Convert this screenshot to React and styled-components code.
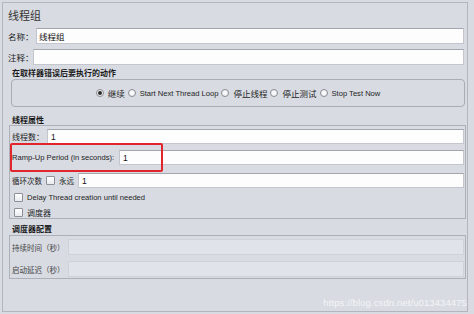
import React from "react";
import styled, { createGlobalStyle } from "styled-components";

const GlobalStyle = createGlobalStyle`
  body {
    margin: 0;
    background: #d8dbe2;
    font-family: "Liberation Sans", "Noto Sans CJK SC", sans-serif;
    color: #1e1e1e;
  }
`;

const Page = styled.div`
  width: 474px;
  height: 314px;
  padding: 2px 6px 0 2px;
  box-sizing: border-box;
  overflow: hidden;
`;

const Frame = styled.div`
  height: 310px;
  box-sizing: border-box;
  border: 1px solid #b3b6bd;
  display: flex;
  flex-direction: column;
`;

const Title = styled.div`
  margin: 5px 0 0 5px;
  height: 14px;
  line-height: 14px;
  font-size: 11px;
  font-family: "Noto Sans CJK SC", sans-serif;
  color: #333;
`;

const FieldRow = styled.div`
  display: flex;
  align-items: center;
  height: ${p => p.h || 16}px;
  margin-top: ${p => p.mt || 0}px;
  padding: ${p => p.pad || '0 3px 0 5px'};
`;

const Label = styled.span`
  font-size: ${p => p.size || (p.latin ? 7.6 : 8)}px;
  font-family: ${p => p.latin ? '"Liberation Sans"' : '"Noto Sans CJK SC"'}, sans-serif;
  width: ${p => p.w ? `${p.w}px` : 'auto'};
  flex-shrink: 0;
  white-space: nowrap;
  color: ${p => p.dim ? '#454545' : '#1e1e1e'};
`;

const TextInput = styled.input`
  flex: 1;
  min-width: 0;
  height: 100%;
  box-sizing: border-box;
  border: 1px solid #c3c6cc;
  border-top-color: #a3a6ac;
  background: ${p => p.disabled ? '#e0e3ea' : '#fdfdfd'};
  padding: 0 0 0 ${p => p.pl || 3}px;
  font-size: 8.5px;
  font-family: "Liberation Sans", "Noto Sans CJK SC", sans-serif;
  color: #111;
  outline: none;
  ${p => p.disabled && 'border-color: #cfd2d8;'}
`;

const Heading = styled.div`
  margin: ${p => p.mt}px 0 0 9px;
  height: 10px;
  line-height: 10px;
  font-size: 8px;
  font-weight: bold;
  font-family: "Noto Sans CJK SC", sans-serif;
  color: #1a1a1a;
`;

const ActionBox = styled.div`
  margin: 1px 2px 0 8px;
  height: 28px;
  box-sizing: border-box;
  border: 1px solid #a9acb3;
  border-radius: 4px;
  display: flex;
  align-items: center;
  justify-content: center;
  gap: 3px;
`;

const RadioItem = styled.label`
  display: flex;
  align-items: center;
  gap: 4px;
`;

const Radio = styled.span`
  width: 8px;
  height: 8px;
  box-sizing: border-box;
  border-radius: 50%;
  border: 1px solid #8b8e94;
  background: radial-gradient(circle, #ffffff 0%, #e6e8ec 100%);
  display: flex;
  align-items: center;
  justify-content: center;
  &::after {
    content: "";
    display: ${p => p.checked ? 'block' : 'none'};
    width: 4px;
    height: 4px;
    border-radius: 50%;
    background: #2a2a2a;
  }
`;

const Box = styled.div`
  position: relative;
  margin: ${p => p.mt || 0}px 1px 0 6px;
  height: ${p => p.h}px;
  box-sizing: border-box;
  border: 1px solid #adb0b7;
  display: flex;
  flex-direction: column;
`;

const CheckRow = styled.div`
  display: flex;
  align-items: center;
  gap: 4px;
  height: 12px;
  margin-top: 3px;
  padding-left: 4px;
`;

const Check = styled.span`
  width: 9px;
  height: 9px;
  box-sizing: border-box;
  border: 1px solid #8d9096;
  border-radius: 1px;
  background: linear-gradient(#ffffff, #e9ebef);
  flex-shrink: 0;
  margin: ${p => p.m || 0};
`;

const Highlight = styled.div`
  position: absolute;
  left: 0;
  top: 17px;
  width: 153px;
  height: 29px;
  box-sizing: border-box;
  border: 2px solid #e0252c;
  border-radius: 2px;
  pointer-events: none;
`;

const Watermark = styled.div`
  margin-top: auto;
  margin-bottom: 3px;
  align-self: flex-end;
  font-size: 9.5px;
  font-family: "Liberation Sans", sans-serif;
  color: rgba(255, 255, 255, 0.75);
  letter-spacing: 0.1px;
`;

const actions = [
  { label: '继续', checked: true },
  { label: 'Start Next Thread Loop', latin: true },
  { label: '停止线程' },
  { label: '停止测试' },
  { label: 'Stop Test Now', latin: true },
];

export default function App() {
  return (
    <Page>
      <GlobalStyle />
      <Frame>
        <Title>线程组</Title>
        <FieldRow mt={6}>
          <Label w={28} size={8.5}>名称：</Label>
          <TextInput readOnly defaultValue="线程组" pl={2} />
        </FieldRow>
        <FieldRow mt={5}>
          <Label w={25} size={8.5}>注释：</Label>
          <TextInput readOnly defaultValue="" />
        </FieldRow>

        <Heading mt={3}>在取样器错误后要执行的动作</Heading>
        <ActionBox>
          {actions.map(a => (
            <RadioItem key={a.label}>
              <Radio checked={a.checked} />
              <Label latin={a.latin} size={a.latin ? 7.6 : 8.5}>{a.label}</Label>
            </RadioItem>
          ))}
        </ActionBox>

        <Heading mt={8}>线程属性</Heading>
        <Box h={94}>
          <FieldRow mt={3} h={15} pad="0 1px 0 2px">
            <Label w={35}>线程数：</Label>
            <TextInput readOnly defaultValue="1" />
          </FieldRow>
          <FieldRow mt={6} h={15} pad="0 1px 0 2px">
            <Label latin w={107}>Ramp-Up Period (in seconds):</Label>
            <TextInput readOnly defaultValue="1" />
          </FieldRow>
          <FieldRow mt={8} h={15} pad="0 1px 0 2px">
            <Label w={34} size={7.5}>循环次数</Label>
            <Check m="0 4px 0 0" />
            <Label w={19} size={7.5}>永远</Label>
            <TextInput readOnly defaultValue="1" />
          </FieldRow>
          <CheckRow>
            <Check />
            <Label latin>Delay Thread creation until needed</Label>
          </CheckRow>
          <CheckRow>
            <Check />
            <Label>调度器</Label>
          </CheckRow>
          <Highlight />
        </Box>

        <Heading mt={5}>调度器配置</Heading>
        <Box h={44} mt={1}>
          <FieldRow mt={3} pad="0 1px 0 2px">
            <Label w={56} size={7.5} dim>持续时间（秒）</Label>
            <TextInput disabled readOnly defaultValue="" />
          </FieldRow>
          <FieldRow mt={6} pad="0 1px 0 2px">
            <Label w={56} size={7.5} dim>启动延迟（秒）</Label>
            <TextInput disabled readOnly defaultValue="" />
          </FieldRow>
        </Box>

        <Watermark>https://blog.csdn.net/u013434475</Watermark>
      </Frame>
    </Page>
  );
}
